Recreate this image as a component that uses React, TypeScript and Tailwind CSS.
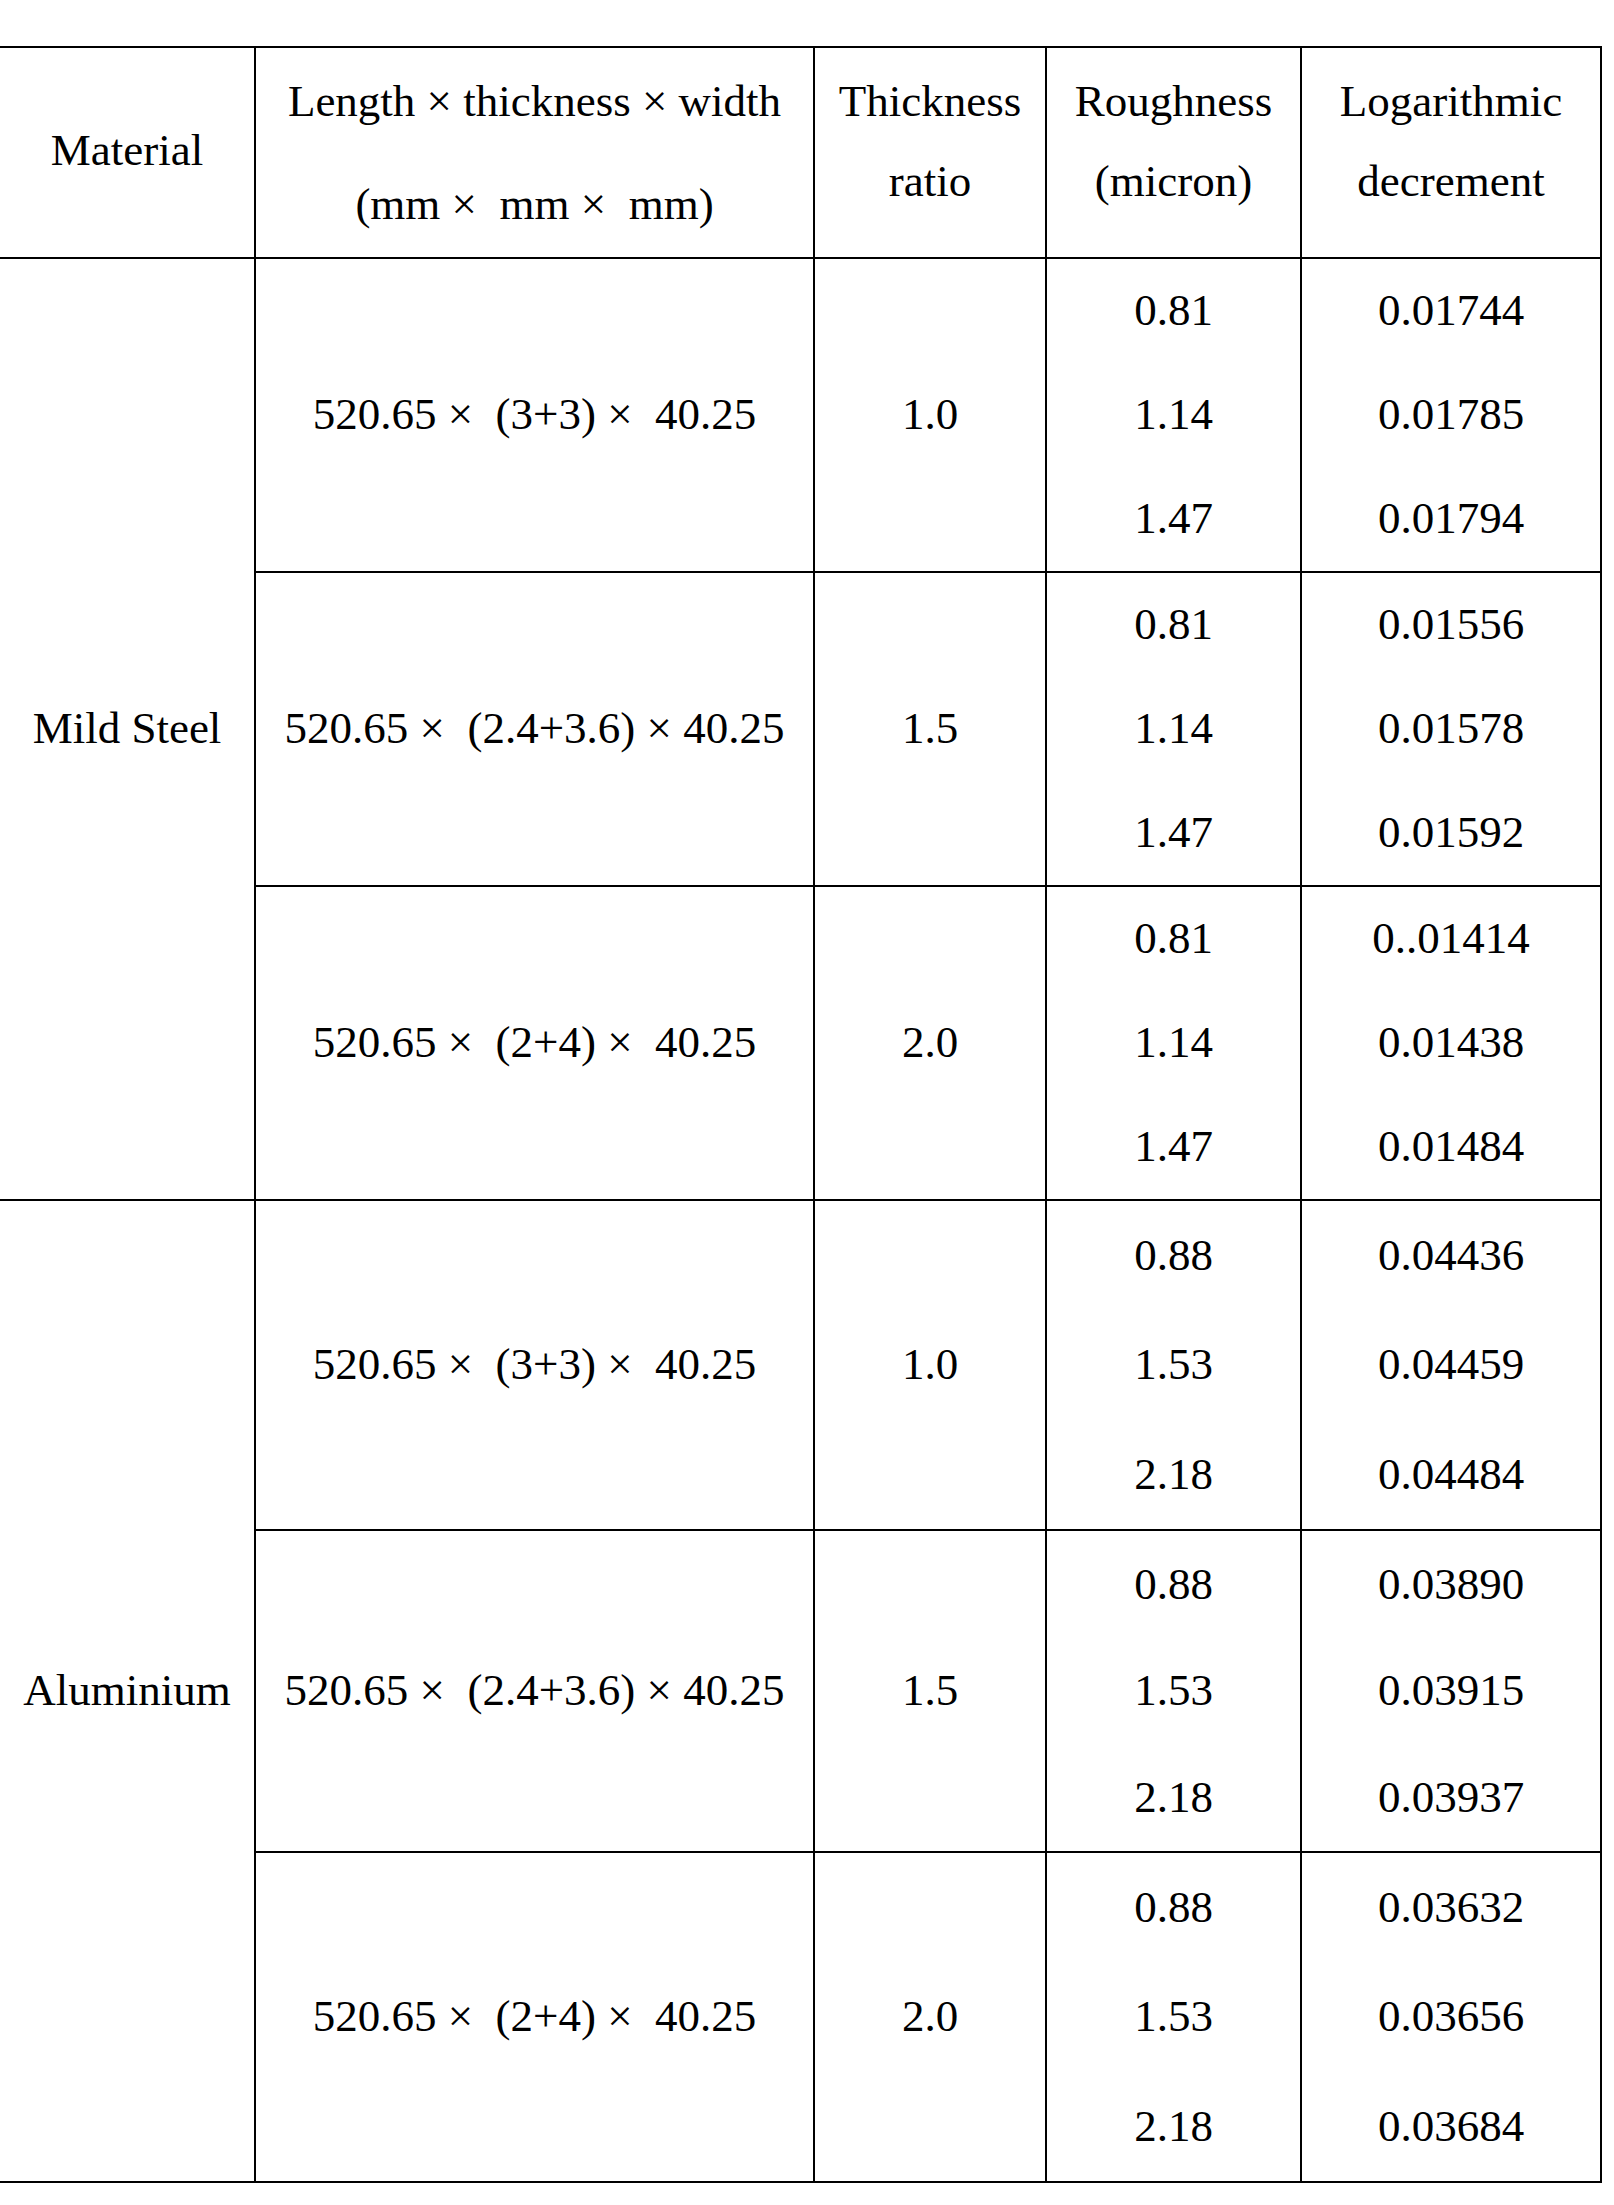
import React from "react";

type Group = {
  material: string;
  rows: { dims: string; ratio: string; rough: string[]; dec: string[] }[];
};

const groups: Group[] = [
  {
    material: "Mild Steel",
    rows: [
      { dims: "520.65 ×  (3+3) ×  40.25", ratio: "1.0", rough: ["0.81", "1.14", "1.47"], dec: ["0.01744", "0.01785", "0.01794"] },
      { dims: "520.65 ×  (2.4+3.6) × 40.25", ratio: "1.5", rough: ["0.81", "1.14", "1.47"], dec: ["0.01556", "0.01578", "0.01592"] },
      { dims: "520.65 ×  (2+4) ×  40.25", ratio: "2.0", rough: ["0.81", "1.14", "1.47"], dec: ["0..01414", "0.01438", "0.01484"] },
    ],
  },
  {
    material: "Aluminium",
    rows: [
      { dims: "520.65 ×  (3+3) ×  40.25", ratio: "1.0", rough: ["0.88", "1.53", "2.18"], dec: ["0.04436", "0.04459", "0.04484"] },
      { dims: "520.65 ×  (2.4+3.6) × 40.25", ratio: "1.5", rough: ["0.88", "1.53", "2.18"], dec: ["0.03890", "0.03915", "0.03937"] },
      { dims: "520.65 ×  (2+4) ×  40.25", ratio: "2.0", rough: ["0.88", "1.53", "2.18"], dec: ["0.03632", "0.03656", "0.03684"] },
    ],
  },
];

function Stack({ items }: { items: string[] }) {
  return (
    <div className="flex flex-col h-full">
      {items.map((t, i) => (
        <div key={i} className="flex-1 flex items-center justify-center whitespace-pre">
          {t}
        </div>
      ))}
    </div>
  );
}

export default function App() {
  const cell = "border-r-2 border-b-2 border-black";
  return (
    <div className="bg-white w-[1614px] min-h-[2205px] pt-[46px] font-['Liberation_Serif','Times_New_Roman',serif] text-[45px] text-black">
      <div className="grid grid-cols-[256px_559px_232px_255px_300px] grid-rows-[211px_314px_314px_314px_330px_322px_330px] border-t-2 border-black w-[1602px]">
        {/* Header */}
        <div className={`${cell} flex items-center justify-center pb-1`}>Material</div>
        <div className={`${cell} flex flex-col items-center justify-center`}>
          <div className="leading-[103px] whitespace-pre">Length × thickness × width</div>
          <div className="leading-[103px] whitespace-pre">(mm ×  mm ×  mm)</div>
        </div>
        <div className={`${cell} flex flex-col items-center justify-center pb-6`}>
          <div className="leading-[80px]">Thickness</div>
          <div className="leading-[80px]">ratio</div>
        </div>
        <div className={`${cell} flex flex-col items-center justify-center pb-6`}>
          <div className="leading-[80px]">Roughness</div>
          <div className="leading-[80px]">(micron)</div>
        </div>
        <div className={`${cell} flex flex-col items-center justify-center pb-6`}>
          <div className="leading-[80px]">Logarithmic</div>
          <div className="leading-[80px]">decrement</div>
        </div>

        {groups.map((g) => (
          <React.Fragment key={g.material}>
            <div className={`${cell} row-span-3 flex items-center justify-center`}>{g.material}</div>
            {g.rows.map((r, i) => (
              <React.Fragment key={i}>
                {i > 0 && null}
                <div className={`${cell} flex items-center justify-center whitespace-pre`}>{r.dims}</div>
                <div className={`${cell} flex items-center justify-center`}>{r.ratio}</div>
                <div className={cell}>
                  <Stack items={r.rough} />
                </div>
                <div className={cell}>
                  <Stack items={r.dec} />
                </div>
              </React.Fragment>
            ))}
          </React.Fragment>
        ))}
      </div>
    </div>
  );
}
